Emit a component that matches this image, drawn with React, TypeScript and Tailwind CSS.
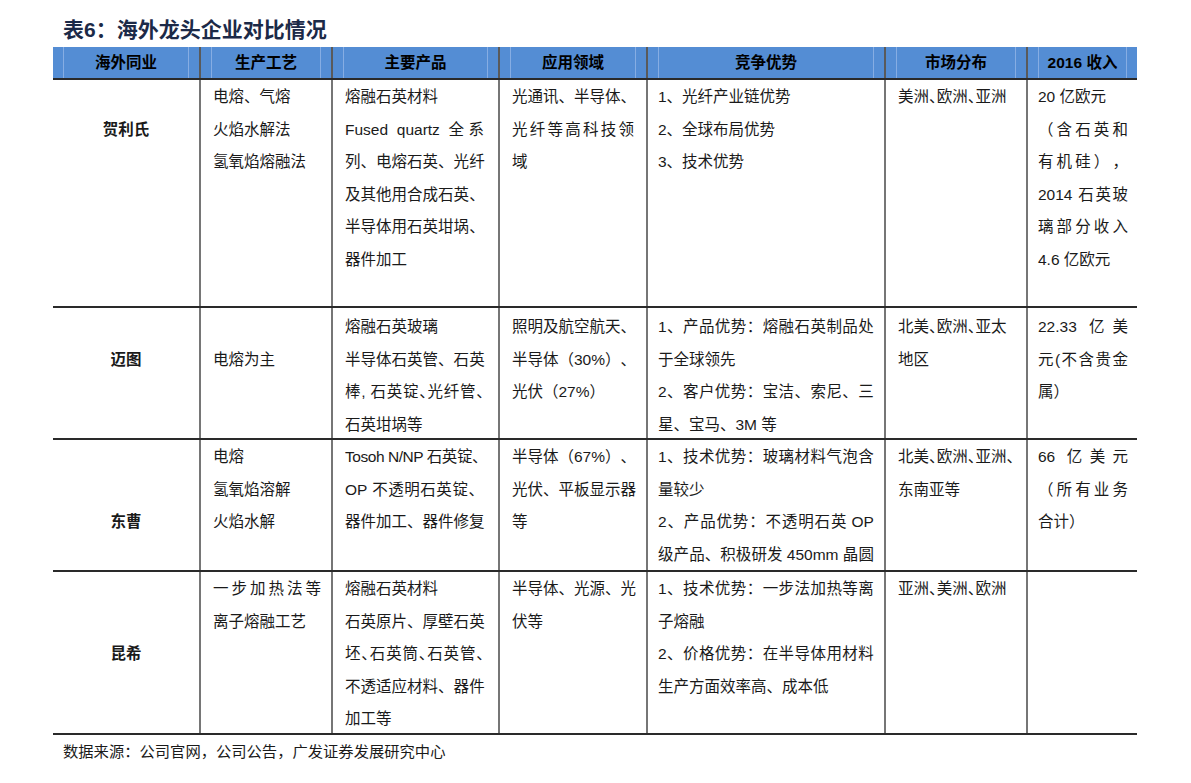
import React from 'react';

type L = { t: string; j?: boolean; h?: boolean; k?: boolean };
const J = (t: string, o: Partial<L> = {}): L => ({ t, j: true, ...o });
const N = (t: string, o: Partial<L> = {}): L => ({ t, ...o });

const W = ['w-[148px]', 'w-[132px]', 'w-[167px]', 'w-[148px]', 'w-[238px]', 'w-[142px]', 'w-[109px]'];
const P = [
  'px-0',
  'pl-[12px] pr-[10px]',
  'pl-[12px] pr-[14px]',
  'pl-[12px] pr-[12px]',
  'pl-[10px] pr-[10px]',
  'pl-[12px] pr-[8px]',
  'pl-[10px] pr-[9px]',
];

const HEAD = ['海外同业', '生产工艺', '主要产品', '应用领域', '竞争优势', '市场分布', '2016 收入'];

type Row = { h: string; pt: string; cells: L[][] };

const ROWS: Row[] = [
  {
    h: 'h-[228px]',
    pt: 'pt-[1px]',
    cells: [
      [N(''), N('贺利氏')],
      [N('电熔、气熔'), N('火焰水解法'), N('氢氧焰熔融法')],
      [N('熔融石英材料'), J('Fused quartz 全系'), J('列、电熔石英、光纤'), J('及其他用合成石英、'), J('半导体用石英坩埚、'), N('器件加工')],
      [J('光通讯、半导体、'), J('光纤等高科技领'), N('域')],
      [N('1、光纤产业链优势'), N('2、全球布局优势'), N('3、技术优势')],
      [N('美洲、欧洲、亚洲', { h: true })],
      [N('20 亿欧元'), J('（含石英和'), J('有机硅），'), J('2014 石英玻'), J('璃部分收入'), N('4.6 亿欧元')],
    ],
  },
  {
    h: 'h-[132px]',
    pt: 'pt-[3px]',
    cells: [
      [N(''), N('迈图')],
      [N(''), N('电熔为主')],
      [N('熔融石英玻璃'), J('半导体石英管、石英'), J('棒, 石英锭、光纤管、', { h: true }), N('石英坩埚等')],
      [N('照明及航空航天、'), N('半导体（30%）、'), N('光伏（27%）')],
      [J('1、产品优势：熔融石英制品处'), N('于全球领先'), J('2、客户优势：宝洁、索尼、三'), N('星、宝马、3M 等')],
      [N('北美、欧洲、亚太', { h: true }), N('地区')],
      [J('22.33 亿美'), J('元(不含贵金'), N('属）')],
    ],
  },
  {
    h: 'h-[132px]',
    pt: 'pt-[1px]',
    cells: [
      [N(''), N(''), N('东曹')],
      [N('电熔'), N('氢氧焰溶解'), N('火焰水解')],
      [N('Tosoh N/NP 石英锭、', { k: true }), J('OP 不透明石英锭、'), N('器件加工、器件修复')],
      [N('半导体（67%）、'), N('光伏、平板显示器'), N('等')],
      [J('1、技术优势：玻璃材料气泡含'), N('量较少'), J('2、产品优势：不透明石英 OP'), J('级产品、积极研发 450mm 晶圆')],
      [N('北美、欧洲、亚洲、', { h: true }), N('东南亚等')],
      [J('66 亿美元'), J('（所有业务'), N('合计）')],
    ],
  },
  {
    h: 'h-[163px]',
    pt: 'pt-[1px]',
    cells: [
      [N(''), N(''), N('昆希')],
      [J('一步加热法等'), N('离子熔融工艺')],
      [N('熔融石英材料'), J('石英原片、厚壁石英'), J('坯、石英筒、石英管、', { h: true }), J('不透适应材料、器件'), N('加工等')],
      [J('半导体、光源、光'), N('伏等')],
      [J('1、技术优势：一步法加热等离'), N('子熔融'), J('2、价格优势：在半导体用材料'), N('生产方面效率高、成本低')],
      [N('亚洲、美洲、欧洲', { h: true })],
      [],
    ],
  },
];

function tokens(t: string): string[] {
  return (t.match(/[A-Za-z0-9.%\/,]+ ?|\S ?/g) || []).map((s) => s.replace(/ $/, '\u00a0'));
}

function Line({ l, bold, center }: { l: L; bold?: boolean; center?: boolean }) {
  const cls = `h-[32.6px] leading-[32.6px] whitespace-nowrap ${l.h ? "[font-feature-settings:'halt']" : ''} ${
    l.k ? 'tracking-[-0.45px]' : ''
  } ${bold ? 'font-bold' : ''} ${center ? 'text-center' : ''}`;
  if (l.j) {
    return (
      <div className={`${cls} flex justify-between`}>
        {tokens(l.t).map((tk, i) => (
          <span key={i}>{tk}</span>
        ))}
      </div>
    );
  }
  return <div className={cls}>{l.t === '' ? '\u00a0' : l.t}</div>;
}

export default function App() {
  return (
    <div className="w-[1191px] h-[783px] bg-white text-[#1a1a1a] [font-family:'Liberation_Sans','Noto_Sans_CJK_SC',sans-serif] [text-spacing-trim:space-all] flex flex-col pt-[16px] overflow-hidden">
      <div className="ml-[63px] h-[27px] leading-[27px] text-[21px] font-bold text-[#1c2a48]">表6：海外龙头企业对比情况</div>
      <div className="ml-[53px] mt-[4px] w-[1084px] flex flex-col text-[15.5px]">
        <div className="flex h-[33px] bg-[#548dd4] border-b-2 border-[#2a2a2a]">
          {HEAD.map((h, i) => (
            <div key={i} className={`${W[i]} h-full ${i < 6 ? 'border-r-2 border-[#5a5a5a]' : ''}`}>
              <div className="mx-[10px] h-full border-x border-[#86ade3] flex items-center justify-center font-bold text-black">
                {h}
              </div>
            </div>
          ))}
        </div>
        {ROWS.map((r, ri) => (
          <div key={ri} className={`flex ${r.h} border-b-2 border-[#2a2a2a]`}>
            {r.cells.map((c, ci) => (
              <div
                key={ci}
                className={`${W[ci]} ${P[ci]} ${r.pt} h-full ${ci < 6 ? 'border-r-2 border-[#767676]' : ''}`}
              >
                {c.map((l, li) => (
                  <Line key={li} l={l} bold={ci === 0} center={ci === 0} />
                ))}
              </div>
            ))}
          </div>
        ))}
      </div>
      <div className="ml-[63px] mt-[7px] h-[20px] leading-[20px] text-[15.3px] text-[#1a1a1a]">
        数据来源：公司官网，公司公告，广发证券发展研究中心
      </div>
    </div>
  );
}
